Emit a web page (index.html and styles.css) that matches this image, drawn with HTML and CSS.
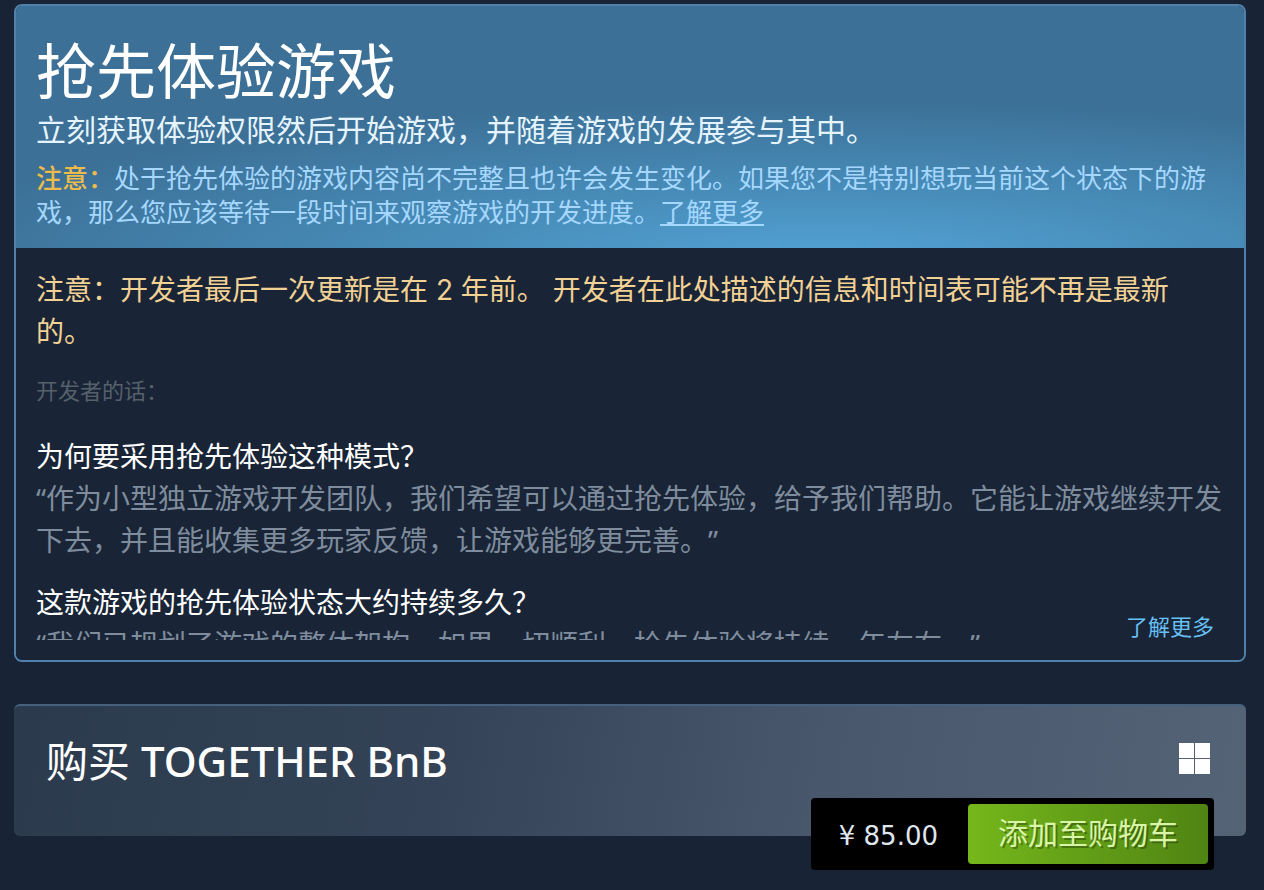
FILE: index.html
```html
<!DOCTYPE html>
<html lang="zh-CN">
<head>
  <meta charset="UTF-8">
  <meta name="viewport" content="width=device-width, initial-scale=1.0">
  <title>TOGETHER BnB</title>
  <link rel="stylesheet" href="styles.css">
</head>
<body>
  <section class="early-access">
    <header class="early-header">
      <h1>抢先体验游戏</h1>
      <p class="subtitle">立刻获取体验权限然后开始游戏，并随着游戏的发展参与其中。</p>
      <p class="notice"><span class="notice-label">注意：</span>处于抢先体验的游戏内容尚不完整且也许会发生变化。如果您不是特别想玩当前这个状态下的游戏，那么您应该等待一段时间来观察游戏的开发进度。<a href="#">了解更多</a></p>
    </header>
    <div class="early-body">
      <div class="early-text">
        <p class="update-warning">注意：开发者最后一次更新是在 2 年前。 开发者在此处描述的信息和时间表可能不再是最新的。</p>
        <p class="dev-label">开发者的话：</p>
        <h3>为何要采用抢先体验这种模式？</h3>
        <p class="answer">“作为小型独立游戏开发团队，我们希望可以通过抢先体验，给予我们帮助。它能让游戏继续开发下去，并且能收集更多玩家反馈，让游戏能够更完善。”</p>
        <h3>这款游戏的抢先体验状态大约持续多久？</h3>
        <p class="answer">“我们已规划了游戏的整体架构，如果一切顺利，抢先体验将持续一年左右。”</p>
      </div>
      <a class="read-more" href="#">了解更多</a>
    </div>
  </section>

  <section class="purchase">
    <div class="purchase-box">
      <h2>购买 <span class="game-name">TOGETHER BnB</span></h2>
      <svg class="platform" viewBox="0 0 32 32" role="img" aria-label="Windows">
        <path d="M1 0h15v15H1zM17 0h15v15H17zM1 16h15v15H1zM17 16h15v15H17z" fill="#fff"/>
      </svg>
    </div>
    <div class="cart">
      <span class="price">¥ 85.00</span>
      <button type="button">添加至购物车</button>
    </div>
  </section>
</body>
</html>
```

FILE: styles.css
```css
* {
  box-sizing: border-box;
}

body {
  margin: 0;
  padding: 4px 18px 20px 14px;
  font-family: "Noto Sans", "Noto Sans CJK SC", sans-serif;
  text-spacing-trim: space-all;
  background-color: #182435;
  color: #fff;
}

h1,
h2,
h3,
p {
  margin: 0;
  font-weight: 400;
}

.early-access {
  border: 2px solid #5080ac;
  border-radius: 8px;
  overflow: hidden;
}

.early-header {
  padding: 27px 20px 19px;
  background: radial-gradient(ellipse 75% 65% at 66% 104%, #52a2d4 0%, #4587b2 55%, #3c7096 100%);
}

.early-header h1 {
  font-size: 60px;
  line-height: 76px;
}

.subtitle {
  font-size: 30px;
  line-height: 42px;
  color: #e6f4ff;
}

.notice {
  margin-top: 10px;
  font-size: 26px;
  line-height: 34px;
  color: #a5d7ff;
}

.notice-label {
  font-weight: 500;
  color: #edbb4b;
}

.notice a {
  color: #a5d7ff;
}

.early-body {
  position: relative;
  padding: 21px 20px 20px;
  font-size: 28px;
  line-height: 42px;
  background-color: #192536;
}

.early-body h3 {
  font-size: 28px;
}

.early-text {
  height: 371px;
  overflow: hidden;
}

.update-warning {
  font-family: Inter, "Noto Sans CJK SC", sans-serif;
  color: #f2d194;
}

.dev-label {
  margin: 16px 0 24px;
  font-size: 22px;
  line-height: 42px;
  color: #56606c;
}

.answer {
  margin-bottom: 20px;
  color: #7f8c9d;
}

.read-more {
  position: absolute;
  right: 30px;
  bottom: 18px;
  font-size: 22px;
  line-height: 32px;
  color: #66c0f4;
  text-decoration: none;
}

.purchase {
  margin-top: 42px;
}

.purchase-box {
  display: flex;
  justify-content: space-between;
  padding: 26px 36px 46px 32px;
  border-top: 2px solid #46617e;
  border-radius: 6px;
  background: linear-gradient(100deg, #2b3b4d 0%, #344357 35%, #48576c 65%, #546376 100%);
}

.purchase-box h2 {
  font-size: 42px;
  line-height: 58px;
}

.game-name {
  font-weight: 500;
}

.platform {
  width: 32px;
  height: 32px;
  margin-top: 11px;
}

.cart {
  display: flex;
  align-items: center;
  width: fit-content;
  margin: -38px 32px 0 auto;
  padding: 6px;
  border-radius: 4px;
  background-color: #000;
  position: relative;
}

.price {
  padding: 4px 30px 0 22px;
  font-family: "DejaVu Sans", sans-serif;
  font-size: 26px;
  color: #dfe6ee;
}

.cart button {
  width: 240px;
  height: 60px;
  padding: 0 0 6px;
  border: none;
  border-radius: 4px;
  font-family: inherit;
  font-size: 30px;
  color: #d9f5a6;
  text-shadow: 2px 2px 0 rgba(0, 0, 0, 0.3);
  background: linear-gradient(to right, #75b71b, #4f8413);
  cursor: pointer;
}
```
